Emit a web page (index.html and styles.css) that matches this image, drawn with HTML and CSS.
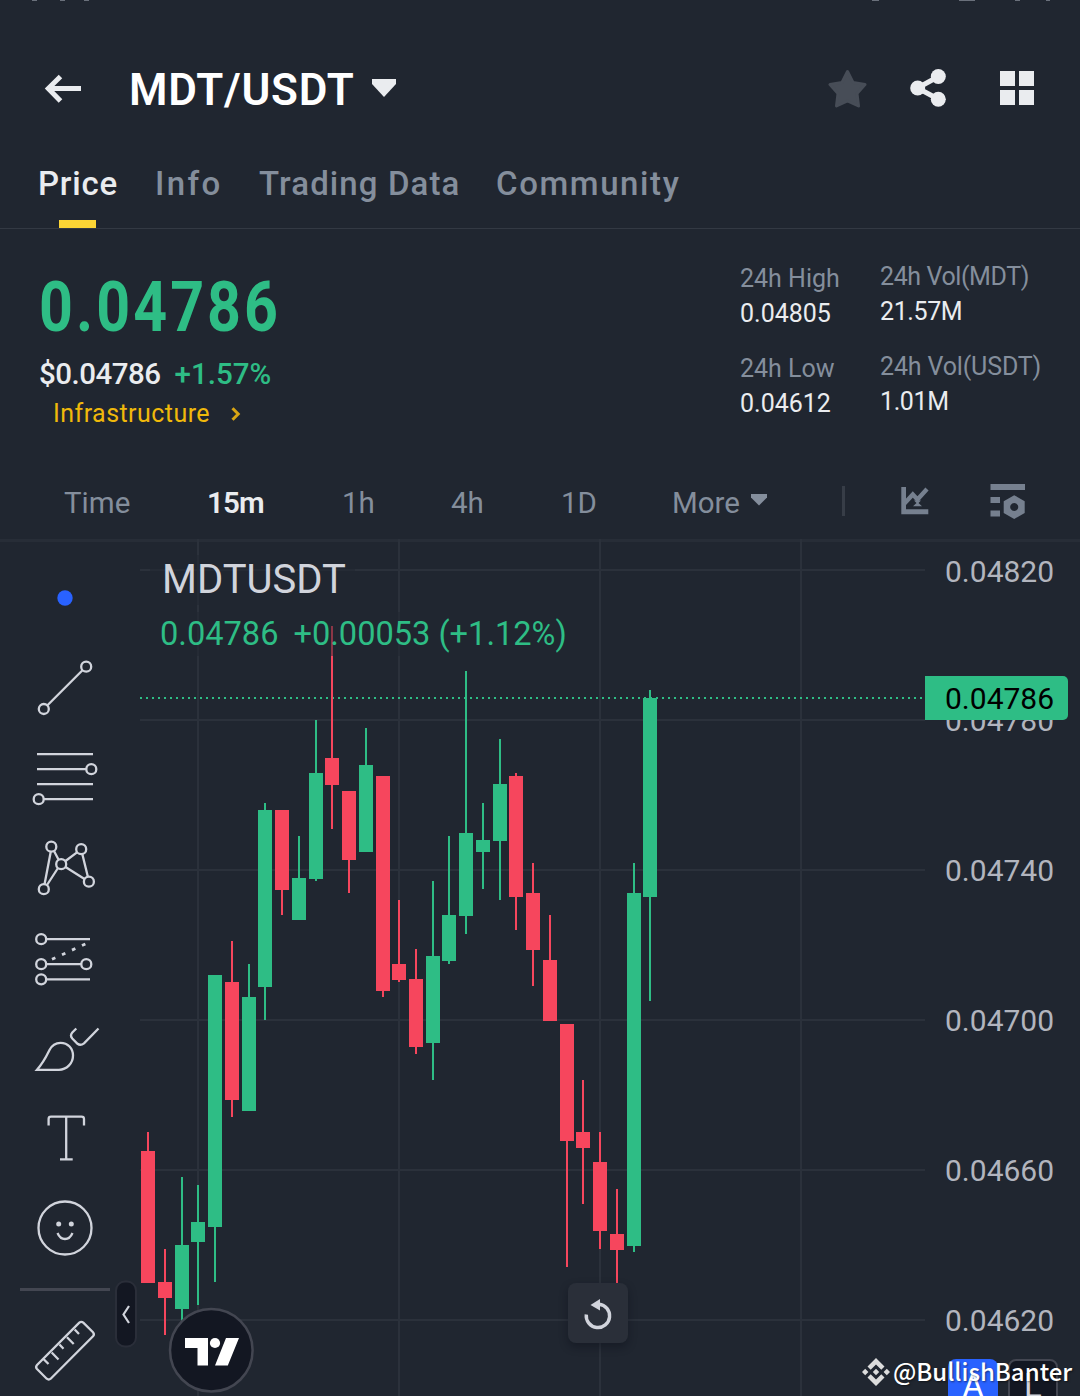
FILE: index.html
```html
<!DOCTYPE html>
<html lang="en">
<head>
<meta charset="utf-8">
<title>MDT/USDT</title>
<link rel="stylesheet" href="styles.css">
</head>
<body>
<div class="app">
  <svg class="status" viewBox="0 0 1080 15" fill="#8a909b"><path d="M32 0h5v1h-5zM60 0h5v1h-5zM84 0h5v1h-5zM872 0h7v1h-7zM959 0h16v1h-16zM1015 0h5v1h-5zM1046 0h4v1h-4z" opacity=".7"/></svg>
  <header class="header">
    <svg class="back" width="40" height="36" viewBox="43 71 40 36" fill="none" stroke="#eaecef" stroke-width="5"><path d="M81 88.500H48M60.500 76.500L48.300 88.500L60.500 101"/></svg>
    <h1 class="pair">MDT/USDT</h1>
    <svg class="caret" width="24" height="18" viewBox="0 0 24 18" fill="#eaecef"><path d="M0 0H24V5L12 18L0 5Z"/></svg>
    <svg class="actions" width="206" height="40" viewBox="828 69 206 40" fill="#eaecef">
      <path d="M847.500 71.500L853 82.500L865 84.500L857 93.500L858.500 106L847.500 101L836.500 106L838 93.500L830 84.500L842 82.500Z" fill="#474d57" stroke="#474d57" stroke-width="3" stroke-linejoin="round"/>
      <path d="M938.500 76.500L917.500 88L938.500 99.300" fill="none" stroke="#eaecef" stroke-width="5"/>
      <circle cx="938.300" cy="76.500" r="7.500"/><circle cx="917.700" cy="88" r="7.500"/><circle cx="938.300" cy="99.300" r="7.500"/>
      <path d="M1000 71h15v15h-15zM1019 71h15v15h-15zM1000 90h15v15h-15zM1019 90h15v15h-15z"/>
    </svg>
  </header>
  <nav class="tabs">
    <div class="tab active t-price"><span>Price</span><i class="bar"></i></div>
    <div class="tab t-info"><span>Info</span></div>
    <div class="tab t-data"><span>Trading Data</span></div>
    <div class="tab t-comm"><span>Community</span></div>
  </nav>
  <section class="summary">
    <div class="quote">
      <div class="price">0.04786</div>
      <div class="sub"><span class="usd">$0.04786</span><span class="pct">+1.57%</span></div>
      <div class="tag"><span>Infrastructure</span><svg width="10" height="14" viewBox="0 0 10 14" fill="none" stroke="#d9a514" stroke-width="3"><path d="M1.500 1.200L7.200 7L1.500 12.800"/></svg></div>
    </div>
    <dl class="stats">
      <dt class="s-high">24h High</dt><dd>0.04805</dd>
      <dt class="s-low">24h Low</dt><dd>0.04612</dd>
    </dl>
    <dl class="stats vol">
      <dt class="s-mdt">24h Vol(MDT)</dt><dd>21.57M</dd>
      <dt class="s-usdt">24h Vol(USDT)</dt><dd>1.01M</dd>
    </dl>
  </section>
  <nav class="frames">
    <span class="f-time">Time</span><span class="on">15m</span><span>1h</span><span>4h</span><span>1D</span><span class="f-more">More</span>
    <svg width="287" height="40" viewBox="744 483 287 40" fill="#76808f">
      <path d="M751 494h16v3.500L759 505.500L751 497.500Z" fill="#848e9c"/>
      <path d="M842 486h3v30h-3z" fill="#373d47"/>
      <path d="M901.300 487h4.700v22.300h22.300v5h-27z"/>
      <path d="M903.500 504.500L912.800 494.500L917.500 499.500L927 489" fill="none" stroke="#76808f" stroke-width="4.300"/>
      <path d="M914 500.500h7l-2.500 2.500l3.500 3.300h-9l3.500-3.300z"/>
      <path d="M990.500 484h34.500v6h-34.500zM990.500 497h9.500v6h-9.500zM990.500 510.500h9.500v6h-9.500z"/>
      <path fill-rule="evenodd" d="M1014.200 495.200L1024.700 501.200V513L1014.200 519L1003.700 513V501.200ZM1014.200 503a4 4 0 1 0 .01 0Z"/>
    </svg>
  </nav>
  <main class="chart">
    <aside class="tools">
      <svg viewBox="0 553 140 90"><circle cx="65" cy="598" r="7.700" fill="#2962ff" stroke="none"/></svg>
      <svg viewBox="0 643 140 90"><circle cx="86.200" cy="666.700" r="5"/><circle cx="43.800" cy="709" r="5"/><path d="M47.500 705.300L82.500 670.300"/></svg>
      <svg viewBox="0 733 140 90"><path d="M37 754.200H93M37 769.200H86M37 784.200H93M44 799.200H93"/><circle cx="91.300" cy="769.200" r="5"/><circle cx="38.700" cy="799.200" r="5"/></svg>
      <svg viewBox="0 823 140 90"><circle cx="51.300" cy="846.700" r="5"/><circle cx="81.200" cy="849.200" r="5"/><circle cx="61.200" cy="864.200" r="5"/><circle cx="88.900" cy="881.700" r="5"/><circle cx="43.800" cy="889.200" r="5"/><path d="M50.700 852L44.600 884M54 851L58.500 859.500M58 868L47 885M65.500 861L77 852.300M65.500 867L84.500 879M82.300 854L87.800 876.500"/></svg>
      <svg viewBox="0 913 140 90"><circle cx="41.200" cy="939.200" r="5"/><circle cx="41.200" cy="964.200" r="5"/><circle cx="86.300" cy="964.200" r="5"/><circle cx="41.200" cy="979.300" r="5"/><path d="M46 939.200H90M46 964.200H81M46 979.300H90"/><path d="M52 959.300L86 943.700" stroke-width="2.800" stroke-dasharray="3.700 7.300"/></svg>
      <svg viewBox="0 1003 140 90"><path d="M76.300 1028.500L72.300 1032.500Q69.700 1035.500 72.300 1038.500L77.500 1043.800Q80.500 1046 84 1043.300L98.500 1028.500M37 1069.800C44 1062 47 1055 49.500 1050C52 1045 56 1042.800 60.500 1042.800C68 1042.800 73 1048.500 73 1055.500C73 1063.500 66.500 1069.800 59 1069.800Z"/></svg>
      <svg viewBox="0 1093 140 90"><path d="M48.600 1125.500V1119Q48.600 1116.700 51 1116.700H81.500Q84 1116.700 84 1119V1125.500M66.200 1117V1159M60 1159.400H72.700"/></svg>
      <svg viewBox="0 1183 140 90"><circle cx="65" cy="1228" r="26.500"/><path d="M57.500 1233Q60 1239 65 1239Q70 1239 72.500 1233"/><circle cx="58.700" cy="1224" r="2.500" class="solid"/><circle cx="71.300" cy="1224" r="2.500" class="solid"/></svg>
      <i class="rule"></i>
      <svg viewBox="0 1306 140 90"><path d="M79.300 1322.700Q81.300 1321 83.300 1322.700L93 1332.300Q94.800 1334.300 93 1336.300L50.700 1378.700Q48.700 1380.300 46.700 1378.700L37 1369Q35.200 1367 37 1365ZM44 1359.500L48.500 1364M51.700 1352.500L58.500 1359.500M59.500 1344.500L63.500 1348.700M67 1337.300L73.700 1344M74.700 1329.500L79 1334"/></svg>
    </aside>
    <div class="plot">
      <svg class="candles" width="785" height="857" viewBox="140 539 785 857">
        <path fill="#2b313b" d="M197 539h2v857h-2zM398 539h2v857h-2zM599 539h2v857h-2zM800 539h2v857h-2zM140 569h785v2h-785zM140 719h785v2h-785zM140 869h785v2h-785zM140 1019h785v2h-785zM140 1169h785v2h-785zM140 1319h785v2h-785z"/>
        <path d="M140 698H925" stroke="#2ebd85" stroke-width="2" stroke-dasharray="2 4"/>
        <path fill="#f6465d" d="M147 1132h2v151h-2zM141 1151h14v132h-14zM164 1249h2v86h-2zM158 1282h14v16h-14zM231 941h2v176h-2zM225 982h14v118h-14zM281 810h2v105h-2zM275 810h14v80h-14zM331 626h2v203h-2zM325 758h14v27h-14zM348 791h2v102h-2zM342 791h14v69h-14zM382 776h2v221h-2zM376 776h14v215h-14zM398 900h2v82h-2zM392 964h14v16h-14zM415 949h2v105h-2zM409 979h14v68h-14zM515 773h2v157h-2zM509 776h14v121h-14zM532 863h2v123h-2zM526 893h14v57h-14zM549 915h2v106h-2zM543 960h14v61h-14zM566 1024h2v243h-2zM560 1024h14v117h-14zM582 1080h2v124h-2zM576 1132h14v16h-14zM599 1132h2v117h-2zM593 1162h14v69h-14zM616 1189h2v100h-2zM610 1234h14v16h-14z"/>
        <path fill="#2ebd85" d="M181 1177h2v145h-2zM175 1245h14v64h-14zM197 1185h2v120h-2zM191 1222h14v20h-14zM214 975h2v307h-2zM208 975h14v252h-14zM248 964h2v147h-2zM242 997h14v114h-14zM264 803h2v217h-2zM258 810h14v177h-14zM298 836h2v84h-2zM292 878h14v42h-14zM315 720h2v161h-2zM309 773h14v106h-14zM365 728h2v124h-2zM359 765h14v87h-14zM432 881h2v199h-2zM426 956h14v87h-14zM448 836h2v128h-2zM442 915h14v46h-14zM465 671h2v263h-2zM459 833h14v83h-14zM482 803h2v86h-2zM476 840h14v12h-14zM499 739h2v161h-2zM493 784h14v57h-14zM633 863h2v389h-2zM627 893h14v353h-14zM649 690h2v311h-2zM643 698h14v199h-14z"/>
      </svg>
      <div class="legend">
        <div class="symbol">MDTUSDT</div>
        <div class="change"><span>0.04786</span><span>+0.00053 (+1.12%)</span></div>
      </div>
      <svg class="collapse" width="22" height="68" viewBox="115 1280 22 68" fill="none"><rect x="116" y="1281.500" width="20" height="65" rx="9" fill="#131722" stroke="#2a2e39" stroke-width="2"/><path d="M129 1306L123.500 1314.500L129 1323" stroke="#d1d4dc" stroke-width="2.200"/></svg>
      <svg class="tv" width="86" height="86" viewBox="168 1307 86 86" fill="#fff"><circle cx="211.300" cy="1350.300" r="41.300" fill="#131722" stroke="#434651" stroke-width="2.500"/><path d="M185 1338H208V1365.500H197.500V1348H185ZM226 1338H239L227.800 1365.500H215Z"/><circle cx="215" cy="1343" r="5.100"/></svg>
      <div class="reset"><svg width="60" height="60" viewBox="568 1283 60 60"><path d="M586.300 1314.500A11.700 11.700 0 1 0 599 1304.200" fill="none" stroke="#d1d4dc" stroke-width="3.400"/><path d="M590.500 1305L600 1299V1310.500Z" fill="#d1d4dc"/></svg></div>
    </div>
    <div class="axis">
      <span class="first">0.04820</span><span>0.04780</span><span>0.04740</span><span>0.04700</span><span>0.04660</span><span>0.04620</span>
      <div class="last">0.04786</div>
      <div class="modes"><b class="auto">A</b><b class="log">L</b></div>
    </div>
  </main>
  <div class="credit">
    <svg width="28" height="28" viewBox="-14 -14 28 28" fill="#dcdcdc"><path d="M0-14L8.500-5.500L5.300-2.300L0-7.600L-5.300-2.300L-8.500-5.500ZM0 14L8.500 5.500L5.300 2.300L0 7.600L-5.300 2.300L-8.500 5.500ZM0-3.200L3.200 0L0 3.200L-3.200 0ZM10.800-3.200L14 0L10.800 3.200L7.600 0ZM-10.800-3.200L-7.600 0L-10.800 3.200L-14 0Z"/></svg>
    <span>@BullishBanter</span>
  </div>
</div>
</body>
</html>
```
FILE: styles.css
```css
* { box-sizing: border-box; margin: 0; padding: 0; }
body { background: #202630; font-family: Roboto, "Liberation Sans", sans-serif; color: #eaecef; }
svg { display: block; }
.app { position: relative; width: 1080px; height: 1396px; overflow: hidden; white-space: nowrap; }
.status { width: 1080px; height: 15px; }

.header { display: flex; align-items: center; height: 147px; padding: 0 46px 0 43px; }
.pair { width: 241px; margin-left: 46px; padding-top: 2px; font-size: 44px; font-weight: 600; line-height: 60px; letter-spacing: .7px; color: #fff; }
.caret { margin-left: 2px; margin-top: -1px; }
.actions { margin-left: auto; }

.tabs { display: flex; height: 67px; padding-top: 2px; padding-left: 38px; border-bottom: 1px solid #333943; font-size: 33px; font-weight: 500; line-height: 39px; color: #848e9c; }
.tab { display: flex; flex-direction: column; justify-content: space-between; align-items: flex-start; }
.tab.active { color: #eaecef; }
.t-price { width: 117px; letter-spacing: .8px; }
.t-info { width: 104px; letter-spacing: 2.4px; }
.t-data { width: 237px; letter-spacing: 1.1px; }
.t-comm { letter-spacing: 1.6px; }
.bar { width: 37px; height: 8px; margin-left: 21px; background: #fcd535; }

.summary { display: flex; height: 238px; padding-left: 39px; }
.quote { width: 701px; padding-top: 40px; }
.price { font-size: 70px; font-weight: 700; line-height: 76px; color: #2ebd85; letter-spacing: 3.6px; transform: scaleX(.845); transform-origin: 0 50%; }
.sub { display: flex; gap: 14px; margin-top: 9px; font-size: 29.5px; font-weight: 500; line-height: 40px; }
.usd { letter-spacing: -.5px; }
.pct { color: #2ebd85; }
.tag { display: flex; align-items: center; padding-left: 14px; font-size: 25px; line-height: 40px; color: #f0b90b; }
.tag span { width: 178px; letter-spacing: .45px; }
.tag svg { margin-top: -1px; }
.stats { width: 140px; padding-top: 32px; font-size: 25px; line-height: 35px; }
.stats.vol { width: 190px; padding-top: 30px; letter-spacing: -.4px; }
.stats .s-usdt { letter-spacing: -.15px; }
.stats dt { color: #848e9c; }
.stats dd + dt { margin-top: 20px; }

.frames { display: grid; grid-template-columns: 143px 135px 109px 110px 111px 72px 287px; align-items: center; height: 72px; padding-left: 64px; font-size: 29.5px; color: #848e9c; }
.frames .on { color: #eaecef; font-weight: 600; letter-spacing: -.9px; }

.chart { display: flex; height: 857px; border-top: 3px solid #272d37; }
.tools { width: 140px; padding-top: 11px; }
.tools svg { width: 140px; height: 90px; fill: none; stroke: #d1d4dc; stroke-width: 2.3; }
.tools .solid { fill: #d1d4dc; stroke: none; }
.rule { display: block; width: 90px; height: 3px; margin: 15px 0 15px 20px; background: #434651; }
.plot { position: relative; width: 785px; height: 854px; }
.candles { margin-top: -3px; }
.legend { position: absolute; left: 10px; top: 13px; }
.symbol { width: 205px; padding-left: 12px; background: rgba(32, 38, 48, .5); font-size: 40px; line-height: 50px; color: #d1d4dc; }
.change { display: flex; gap: 15px; margin-top: 7px; padding: 1px 10px 0; background: rgba(32, 38, 48, .5); font-size: 32.6px; line-height: 43px; color: #2ebd85; }
.collapse { position: absolute; left: -25px; top: 738px; }
.tv { position: absolute; left: 28px; top: 765px; }
.reset { position: absolute; left: 428px; top: 741px; border-radius: 8px; background: #2a2f39; box-shadow: 0 4px 8px rgba(10, 13, 22, .4); }
.axis { position: relative; width: 155px; padding-left: 20px; font-size: 30px; color: #b2b5be; }
.axis > span { display: block; height: 150px; line-height: 60px; }
.axis > .first { height: 149px; }
.last { position: absolute; left: 0; top: 134px; width: 143px; height: 44px; padding-left: 20px; border-radius: 0 5px 5px 0; background: #2ebd85; color: #000; line-height: 46px; }
.modes { position: absolute; left: 23px; top: 817px; display: flex; gap: 10px; font-size: 33px; }
.modes b { width: 50px; height: 50px; border-radius: 8px; font-weight: 400; line-height: 54px; text-align: center; }
.auto { background: #2962ff; color: #fff; }
.modes .log { border: 2px solid #434651; background: #131722; color: #d1d4dc; line-height: 50px; }
.credit { position: absolute; left: 862px; top: 1354px; display: flex; align-items: center; gap: 3px; font-family: "Noto Sans CJK SC", sans-serif; font-size: 24px; font-weight: 500; line-height: 38px; color: #fff; text-shadow: 1px 1px 2px rgba(0, 0, 0, .5); }
.credit span { margin-top: -2px; }
```
